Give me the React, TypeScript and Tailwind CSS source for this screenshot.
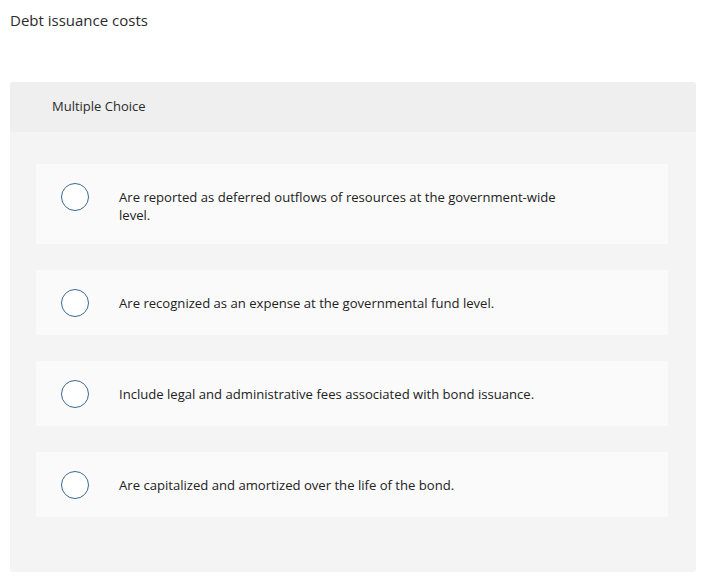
import React from 'react';

const choices = [
  'Are reported as deferred outflows of resources at the government-wide level.',
  'Are recognized as an expense at the governmental fund level.',
  'Include legal and administrative fees associated with bond issuance.',
  'Are capitalized and amortized over the life of the bond.',
];

function Radio() {
  return (
    <span className="block h-[28px] w-[28px] shrink-0 rounded-full border-[1.5px] border-[#3a6898] bg-white" />
  );
}

export default function App() {
  return (
    <div className="min-h-screen bg-white font-['Open_Sans',sans-serif] text-[#222]">
      <h1 className="pl-[10px] pt-[10px] text-[15px] leading-[20px] text-[#2b2b2b]">Debt issuance costs</h1>

      <section className="mx-[10px] mt-[52px] w-[686px] overflow-hidden rounded-[3px] bg-[#f4f4f4]">
        <header className="flex h-[50px] items-center bg-[#efefef] pl-[42px] text-[13px] text-[#2b2b2b]">
          Multiple Choice
        </header>

        <div className="flex flex-col gap-[26px] pb-[55px] pl-[26px] pr-[28px] pt-[32px]">
          {choices.map((c) => (
            <label
              key={c}
              className="flex cursor-pointer items-start rounded-[3px] bg-[#fafafa] pb-[18px] pl-[25px] pt-[19px]"
            >
              <Radio />
              <span className="ml-[30px] max-w-[455px] pb-[2px] pt-[5px] text-[13.1px] leading-[18px] text-[#222]">
                {c}
              </span>
            </label>
          ))}
        </div>
      </section>
    </div>
  );
}
